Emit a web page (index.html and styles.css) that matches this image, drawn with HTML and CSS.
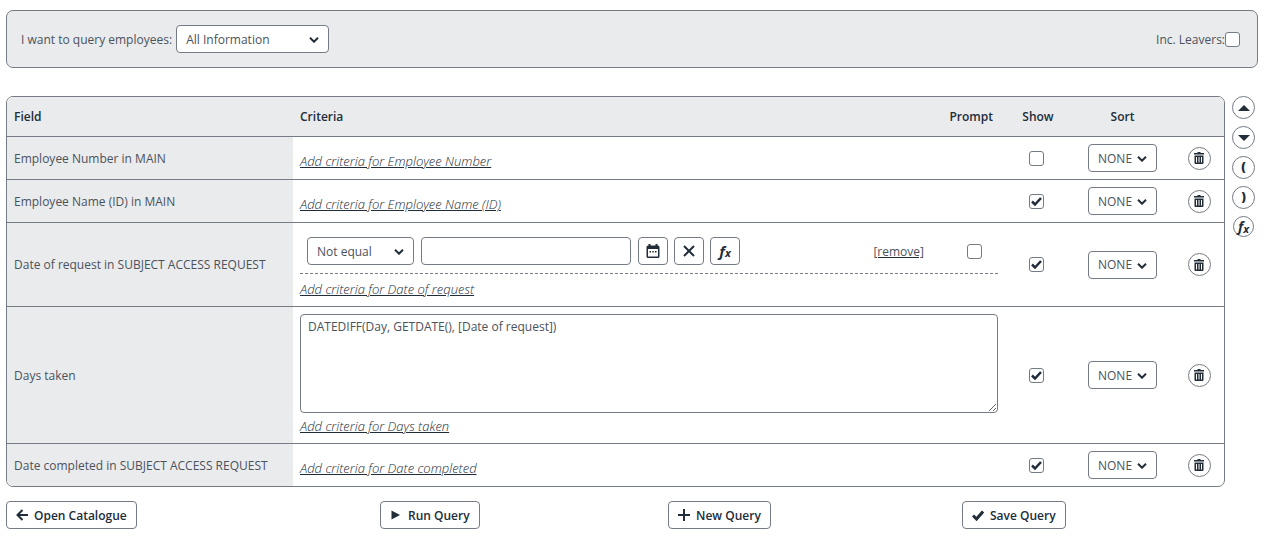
FILE: index.html
```html
<!DOCTYPE html>
<html lang="en">

<head>
    <meta charset="UTF-8">
    <meta name="viewport" content="width=device-width, initial-scale=1.0">
    <title>Query Builder</title>
    <link rel="stylesheet" href="styles.css">
</head>

<body>

<!-- Icons used more than once -->
<svg class="sprite" aria-hidden="true">
    <symbol id="bin" viewBox="0 0 12 14">
        <path d="M1 2h3.500V1h3v1H11v1.500H1z"/>
        <path fill-rule="evenodd" d="M1.500 4.500h9V12a1 1 0 0 1-1 1h-7a1 1 0 0 1-1-1zM3 6v5.500h1V6zM5.500 6v5.500h1V6zM8 6v5.500h1V6z"/>
    </symbol>
</svg>

<header class="query-bar">
    <div>
        <label for="scope">I want to query employees:</label>
        <select class="select scope" id="scope">
            <option>All Information</option>
        </select>
    </div>
    <div class="leavers">
        <label for="leavers">Inc. Leavers:</label>
        <input type="checkbox" class="check" id="leavers">
    </div>
</header>

<main class="builder">
    <table class="fields">
        <colgroup>
            <col class="col-field">
            <col>
            <col class="col-show">
            <col class="col-sort">
            <col class="col-delete">
        </colgroup>
        <thead>
            <tr>
                <th>Field</th>
                <th><div class="criteria-head"><span>Criteria</span><span>Prompt</span></div></th>
                <th class="center">Show</th>
                <th class="center">Sort</th>
                <th></th>
            </tr>
        </thead>
        <tbody>
            <tr>
                <td class="name">Employee Number in MAIN</td>
                <td><a href="#" class="add">Add criteria for Employee Number</a></td>
                <td class="show"><input type="checkbox" class="check" aria-label="Show Employee Number"></td>
                <td class="center"><select class="select sort" aria-label="Sort Employee Number"><option>NONE</option></select></td>
                <td class="center"><button type="button" class="round" aria-label="Delete"><svg class="bin"><use href="#bin"/></svg></button></td>
            </tr>
            <tr>
                <td class="name">Employee Name (ID) in MAIN</td>
                <td><a href="#" class="add">Add criteria for Employee Name (ID)</a></td>
                <td class="show"><input type="checkbox" class="check" checked aria-label="Show Employee Name"></td>
                <td class="center"><select class="select sort" aria-label="Sort Employee Name"><option>NONE</option></select></td>
                <td class="center"><button type="button" class="round" aria-label="Delete"><svg class="bin"><use href="#bin"/></svg></button></td>
            </tr>
            <tr>
                <td class="name">Date of request in SUBJECT ACCESS REQUEST</td>
                <td>
                    <div class="criterion">
                        <select class="select operator" aria-label="Operator"><option>Not equal</option></select>
                        <input type="text" class="value" aria-label="Value">
                        <div class="tools">
                            <button type="button" class="tool" aria-label="Pick date">
                                <svg width="14" height="14" viewBox="0 0 14 14"><path fill-rule="evenodd" d="M2.500 0h2v1.500h5V0h2v1.500h.5A1.500 1.500 0 0 1 13.500 3v9.500A1.500 1.500 0 0 1 12 14H2A1.500 1.500 0 0 1 .5 12.500V3A1.500 1.500 0 0 1 2 1.500h.5zM2 5v7.500h10V5z"/><path d="M3.500 7H5v1.500H3.500zM6.300 7h1.500v1.500H6.300zM9 7h1.500v1.500H9z"/></svg>
                            </button>
                            <button type="button" class="tool" aria-label="Clear">
                                <svg width="12" height="12" viewBox="0 0 12 12"><path class="line" d="M1 1l10 10M11 1L1 11"/></svg>
                            </button>
                            <button type="button" class="tool fx" aria-label="Formula">f<sub>x</sub></button>
                        </div>
                        <a href="#" class="remove">[remove]</a>
                        <input type="checkbox" class="check prompt" aria-label="Prompt">
                    </div>
                    <a href="#" class="add">Add criteria for Date of request</a>
                </td>
                <td class="show"><input type="checkbox" class="check" checked aria-label="Show Date of request"></td>
                <td class="center"><select class="select sort" aria-label="Sort Date of request"><option>NONE</option></select></td>
                <td class="center"><button type="button" class="round" aria-label="Delete"><svg class="bin"><use href="#bin"/></svg></button></td>
            </tr>
            <tr>
                <td class="name">Days taken</td>
                <td>
                    <textarea class="formula" aria-label="Formula for Days taken">DATEDIFF(Day, GETDATE(), [Date of request])</textarea>
                    <a href="#" class="add">Add criteria for Days taken</a>
                </td>
                <td class="show"><input type="checkbox" class="check" checked aria-label="Show Days taken"></td>
                <td class="center"><select class="select sort" aria-label="Sort Days taken"><option>NONE</option></select></td>
                <td class="center"><button type="button" class="round" aria-label="Delete"><svg class="bin"><use href="#bin"/></svg></button></td>
            </tr>
            <tr>
                <td class="name">Date completed in SUBJECT ACCESS REQUEST</td>
                <td><a href="#" class="add">Add criteria for Date completed</a></td>
                <td class="show"><input type="checkbox" class="check" checked aria-label="Show Date completed"></td>
                <td class="center"><select class="select sort" aria-label="Sort Date completed"><option>NONE</option></select></td>
                <td class="center"><button type="button" class="round" aria-label="Delete"><svg class="bin"><use href="#bin"/></svg></button></td>
            </tr>
        </tbody>
    </table>

    <div class="side">
        <button type="button" class="round" aria-label="Move up"><svg width="12" height="6" viewBox="0 0 12 6"><path d="M0 6l6-6 6 6z"/></svg></button>
        <button type="button" class="round" aria-label="Move down"><svg width="12" height="6" viewBox="0 0 12 6"><path d="M0 0h12L6 6z"/></svg></button>
        <button type="button" class="round bracket">(</button>
        <button type="button" class="round bracket">)</button>
        <button type="button" class="round small fx" aria-label="Add formula">f<sub>x</sub></button>
    </div>
</main>

<footer class="actions">
    <div>
        <button type="button" class="btn">
            <svg width="12" height="12" viewBox="0 0 12 12"><path class="line" d="M12 6H1.500M6.500 1l-5 5 5 5"/></svg>
            Open Catalogue
        </button>
    </div>
    <div>
        <button type="button" class="btn">
            <svg width="12" height="12" viewBox="0 0 12 12"><path d="M1.500 1.500L10 6l-8.500 4.500z"/></svg>
            Run Query
        </button>
    </div>
    <div>
        <button type="button" class="btn">
            <svg width="12" height="12" viewBox="0 0 12 12"><path class="line" d="M6 0v12M0 6h12"/></svg>
            New Query
        </button>
    </div>
    <div>
        <button type="button" class="btn">
            <svg width="12" height="12" viewBox="0 0 12 12"><path class="tick" d="M1 6.500L4.500 10 11 2.500"/></svg>
            Save Query
        </button>
    </div>
</footer>

</body>
</html>
```

FILE: styles.css
```css
* {
    box-sizing: border-box;
}

body {
    font-family: "Open Sans", sans-serif;
    font-size: 12px;
    line-height: 17px;
    color: #4a525c;
    background-color: #fff;
    margin: 10px 7px 10px 6px;
}

input, select, textarea, button {
    font: inherit;
    color: inherit;
    margin: 0;
    background-color: #fff;
    border: 1px solid #747b85;
    border-radius: 4px;
}

button {
    display: inline-flex;
    align-items: center;
    justify-content: center;
    padding: 0;
    color: #222d3a;
    cursor: pointer;
}

a {
    color: inherit;
    text-decoration-color: #222d3a;
}

svg {
    fill: #222d3a;
    flex: none;
}

.sprite {
    display: none;
}

.line, .tick {
    fill: none;
    stroke: #222d3a;
    stroke-width: 2;
}

.tick {
    stroke-width: 3;
}

.query-bar {
    display: flex;
    align-items: center;
    justify-content: space-between;
    height: 58px;
    padding: 0 17px 0 14px;
    margin-bottom: 28px;
    background-color: #eaebed;
    border: 1px solid #747b85;
    border-radius: 7px;
}

.leavers {
    display: flex;
    align-items: center;
}

.select {
    appearance: none;
    height: 28px;
    padding: 0 9px;
    background: #fff url("data:image/svg+xml,%3Csvg xmlns='http://www.w3.org/2000/svg' width='10' height='6' viewBox='0 0 10 6'%3E%3Cpath d='M1 .7l4 4 4-4' fill='none' stroke='%23222d3a' stroke-width='2'/%3E%3C/svg%3E") no-repeat right 9px top 11px;
}

.scope {
    width: 153px;
    margin-left: 1px;
}

.operator {
    width: 107px;
}

.sort {
    width: 69px;
}

.check {
    appearance: none;
    display: block;
    width: 15px;
    height: 15px;
    border-radius: 3px;
}

.check:checked {
    background: #fff url("data:image/svg+xml,%3Csvg xmlns='http://www.w3.org/2000/svg' width='11' height='9' viewBox='0 0 11 9'%3E%3Cpath d='M1 4.500l3 3L10 1' fill='none' stroke='%23222d3a' stroke-width='2.500'/%3E%3C/svg%3E") no-repeat center;
}

.builder {
    display: flex;
    align-items: flex-start;
    gap: 7px;
}

.fields {
    flex: 1;
    table-layout: fixed;
    border-collapse: separate;
    border-spacing: 0;
    border: 1px solid #747b85;
    border-radius: 7px;
    overflow: hidden;
}

.col-field {
    width: 286px;
}

.col-show {
    width: 66px;
}

.col-sort {
    width: 103px;
}

.col-delete {
    width: 50px;
}

th {
    height: 39px;
    padding: 0 7px;
    font-weight: 600;
    text-align: left;
    color: #222d3a;
    background-color: #eaebed;
}

.criteria-head {
    display: flex;
    justify-content: space-between;
    padding-right: 5px;
}

td {
    padding: 7px;
    border-top: 1px solid #747b85;
}

.name {
    background-color: #eaebed;
}

.center {
    text-align: center;
}

td.center > * {
    display: flex;
    margin: 0 auto;
}

.show .check {
    margin-left: 17px;
}

.add {
    display: table;
    margin-top: 7px;
    padding-bottom: 1px;
    font-size: 13px;
    font-weight: 300;
    font-style: italic;
    color: #222d3a;
}

.criterion {
    display: flex;
    align-items: center;
    gap: 7px;
    padding: 7px 16px 8px 7px;
    border-bottom: 1px dashed #747b85;
}

.value {
    width: 210px;
    height: 28px;
    padding: 0 7px;
}

.tools {
    display: flex;
    gap: 6px;
}

.tool {
    width: 30px;
    height: 28px;
}

.fx {
    font-size: 15px;
    font-style: italic;
    font-weight: 700;
    line-height: 16px;
}

.fx sub {
    font-size: 11px;
    line-height: 11px;
    padding-top: 3px;
}

.remove {
    margin-left: auto;
}

.prompt {
    margin-left: 36px;
}

.formula {
    display: block;
    width: 100%;
    height: 99px;
    padding: 3px 7px;
}

.formula + .add {
    margin-top: 5px;
}

.round {
    width: 23px;
    height: 23px;
    border-radius: 50%;
}

.bin {
    width: 12px;
    height: 14px;
}

.side {
    display: flex;
    flex-direction: column;
    align-items: center;
    gap: 7px;
    width: 26px;
    padding-right: 3px;
}

.bracket {
    padding-bottom: 2px;
    font-size: 13px;
    font-weight: 800;
}

.small {
    width: 21px;
    height: 21px;
    font-size: 14px;
}

.actions {
    display: grid;
    grid-template-columns: 374fr 288fr 294fr 296fr;
    margin-top: 14px;
}

.btn {
    gap: 6px;
    height: 28px;
    padding: 0 9px;
    font-weight: 600;
}
```
